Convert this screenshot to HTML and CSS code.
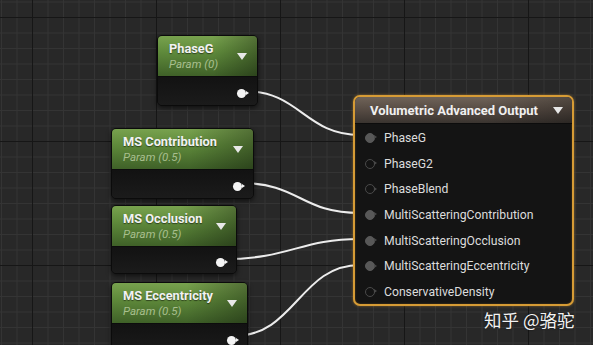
FILE: index.html
```html
<!DOCTYPE html>
<html>
<head>
  <meta charset="UTF-8" />
  <title>Material Graph</title>
  <link rel="stylesheet" href="styles.css">
</head>
<body>
  <div class="graph">
    <svg class="wires" width="593" height="345" viewBox="0 0 593 345">
      <path d="M244 91 C300 91, 305 135, 360 135" />
      <path d="M240 183 C300 183, 300 213, 360 213" />
      <path d="M224 259 C290 259, 300 239, 360 239" />
      <path d="M234 336 C295 336, 300 265, 360 265" />
    </svg>

    <div class="node param n-phaseg">
      <div class="node-head">
        <div class="node-titles">
          <div class="node-title">PhaseG</div>
          <div class="node-sub">Param (0)</div>
        </div>
        <span class="arrow"></span>
      </div>
      <div class="node-body"><span class="pin-out"></span></div>
    </div>

    <div class="node param n-contrib">
      <div class="node-head">
        <div class="node-titles">
          <div class="node-title">MS Contribution</div>
          <div class="node-sub">Param (0.5)</div>
        </div>
        <span class="arrow"></span>
      </div>
      <div class="node-body"><span class="pin-out"></span></div>
    </div>

    <div class="node param n-occl">
      <div class="node-head">
        <div class="node-titles">
          <div class="node-title">MS Occlusion</div>
          <div class="node-sub">Param (0.5)</div>
        </div>
        <span class="arrow"></span>
      </div>
      <div class="node-body"><span class="pin-out"></span></div>
    </div>

    <div class="node param n-ecc">
      <div class="node-head">
        <div class="node-titles">
          <div class="node-title">MS Eccentricity</div>
          <div class="node-sub">Param (0.5)</div>
        </div>
        <span class="arrow"></span>
      </div>
      <div class="node-body"><span class="pin-out"></span></div>
    </div>

    <div class="output">
      <div class="output-head">
        <span class="output-title">Volumetric Advanced Output</span>
        <span class="arrow"></span>
      </div>
      <ul class="inputs">
        <li><span class="pin-in on"></span>PhaseG</li>
        <li><span class="pin-in"></span>PhaseG2</li>
        <li><span class="pin-in"></span>PhaseBlend</li>
        <li><span class="pin-in on"></span>MultiScatteringContribution</li>
        <li><span class="pin-in on"></span>MultiScatteringOcclusion</li>
        <li><span class="pin-in on"></span>MultiScatteringEccentricity</li>
        <li><span class="pin-in"></span>ConservativeDensity</li>
      </ul>
    </div>

    <div class="watermark">知乎 @骆驼</div>
  </div>
</body>
</html>
```

FILE: styles.css
```css
html, body {
  margin: 0;
  padding: 0;
}

body {
  background: #262626;
  font-family: Roboto, "Liberation Sans", sans-serif;
}

.graph {
  position: relative;
  width: 593px;
  height: 345px;
  overflow: hidden;
  background-color: #282828;
  background-image:
    linear-gradient(90deg, #161616 1px, transparent 1px),
    linear-gradient(180deg, #161616 1px, transparent 1px),
    linear-gradient(90deg, #343434 1px, transparent 1px),
    linear-gradient(180deg, #343434 1px, transparent 1px);
  background-size: 124px 124px, 124px 124px, 15.5px 15.5px, 15.5px 15.5px;
  background-position: 32px 0, 0 17px, 1px 0, 0 1.5px;
}

.wires {
  position: absolute;
  left: 0;
  top: 0;
}

.wires path {
  fill: none;
  stroke: #ececec;
  stroke-width: 2;
}

/* parameter nodes */
.node {
  position: absolute;
  display: flex;
  flex-direction: column;
  border: 1px solid #0b0b0b;
  border-radius: 5px;
  overflow: hidden;
  box-shadow: 0 2px 5px rgba(0, 0, 0, 0.6);
  background: #161616;
}

.n-phaseg { left: 157px; top: 35px; width: 99px; }
.n-contrib { left: 111px; top: 128px; width: 141px; }
.n-occl { left: 111px; top: 205px; width: 124px; }
.n-ecc { left: 111px; top: 282px; width: 135px; }

.node-head {
  display: flex;
  align-items: center;
  justify-content: space-between;
  height: 40px;
  padding: 0 10px 0 11px;
  background:
    linear-gradient(90deg, rgba(0,0,0,0) 55%, rgba(0,0,0,0.3) 100%),
    linear-gradient(180deg, #78a24e 0%, #5f8a3b 40%, #3f6128 100%);
  border-bottom: 1px solid #0c0c0c;
}

.node-titles {
  display: flex;
  flex-direction: column;
  gap: 1px;
}

.node-title {
  color: #f2f2f2;
  font-size: 12.8px;
  font-weight: bold;
  text-shadow: 0 1px 1px rgba(0,0,0,0.5);
}

.node-sub {
  color: #a8bf8e;
  font-size: 11.5px;
  font-style: italic;
}

.arrow {
  width: 0;
  height: 0;
  border-left: 5px solid transparent;
  border-right: 5px solid transparent;
  border-top: 7px solid #e8e8e8;
}

.node-body {
  display: flex;
  justify-content: flex-end;
  align-items: center;
  height: 28px;
  padding-right: 11px;
  background: linear-gradient(180deg, #121212, #1b1b1b);
}

.n-occl .node-body { height: 26px; }

.pin-out {
  position: relative;
  width: 9px;
  height: 9px;
  border-radius: 50%;
  background: #f4f4f4;
  margin-top: 4px;
}

.pin-out::after {
  content: "";
  position: absolute;
  left: 9px;
  top: 2px;
  border-top: 2.5px solid transparent;
  border-bottom: 2.5px solid transparent;
  border-left: 3px solid #f4f4f4;
}

/* output node */
.output {
  position: absolute;
  left: 353px;
  top: 95px;
  width: 217px;
  height: 207px;
  border: 2px solid #d69b35;
  border-radius: 7px;
  background: #141414;
  box-shadow: 0 0 3px rgba(214, 155, 53, 0.5), inset 0 0 2px rgba(214, 155, 53, 0.4);
  overflow: hidden;
}

.output-head {
  display: flex;
  align-items: center;
  justify-content: space-between;
  height: 26px;
  padding: 0 9px 0 15px;
  background:
    linear-gradient(90deg, rgba(0,0,0,0) 60%, rgba(0,0,0,0.25) 100%),
    linear-gradient(180deg, #6f6358 0%, #564b43 50%, #3a3430 100%);
  border-bottom: 1px solid #0c0c0c;
}

.output-title {
  color: #f0f0f0;
  font-size: 13px;
  font-weight: bold;
}

.inputs {
  list-style: none;
  margin: 0;
  padding: 1px 0 0 0;
}

.inputs li {
  display: flex;
  align-items: center;
  gap: 9px;
  height: 25.7px;
  padding-left: 10px;
  color: #dcdcdc;
  font-size: 12.2px;
}

.pin-in {
  position: relative;
  box-sizing: border-box;
  width: 10px;
  height: 10px;
  border-radius: 50%;
  border: 1.5px solid #4a4a4a;
}

.pin-in.on {
  background: #585858;
  border-color: #585858;
}

.pin-in::after {
  content: "";
  position: absolute;
  left: 8px;
  top: 1.5px;
  border-top: 2.5px solid transparent;
  border-bottom: 2.5px solid transparent;
  border-left: 3px solid #4a4a4a;
}

.watermark {
  position: absolute;
  left: 484px;
  top: 307px;
  color: #f2f2f2;
  font-family: "Noto Sans CJK SC", sans-serif;
  font-size: 17.5px;
  text-shadow: 0 0 2px rgba(0,0,0,0.6);
}
```
